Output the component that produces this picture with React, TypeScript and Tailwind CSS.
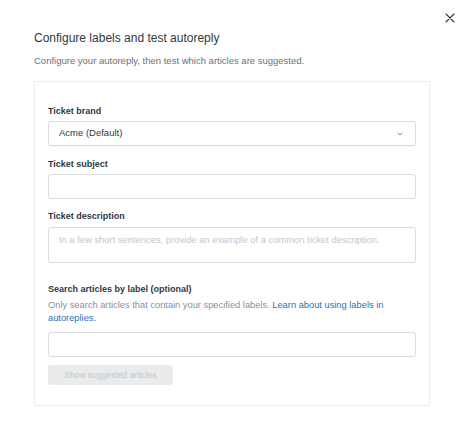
export default function App() {
  return (
    <div className="relative min-h-[423px] w-[474px] bg-white text-[#2f3941] font-['Liberation_Sans',Arial,sans-serif]">
      {/* close */}
      <button className="absolute right-[19px] top-[13px] flex h-[10px] w-[10px] items-center justify-center text-[#2f3941]">
        <svg width="10" height="10" viewBox="0 0 10 10" fill="none" stroke="currentColor" strokeWidth="1.1" strokeLinecap="round">
          <path d="M1 1l8 8M9 1L1 9" />
        </svg>
      </button>

      <div className="px-[34px] pt-[31px]">
        <h1 className="text-[12px] leading-[15px] font-normal">
          Configure labels and test autoreply
        </h1>
        <p className="mt-[8px] text-[9.5px] leading-[14px] text-[#68737d]">
          Configure your autoreply, then test which articles are suggested.
        </p>

        <div className="mt-[13px] w-[396px] border border-[#ececec] px-[13px] pt-[22px] pb-[20px]">
          <label className="block text-[9px] font-bold leading-[14px]">Ticket brand</label>
          <div className="mt-[3px] flex h-[25px] items-center justify-between rounded-[3px] border border-[#d8dcde] pl-[10px] pr-[12px] text-[9.5px] shadow-[0_1px_1px_rgba(0,0,0,0.03)]">
            <span>Acme (Default)</span>
            <svg width="6" height="4" viewBox="0 0 6 4" fill="none" stroke="#68737d" strokeWidth="0.9" strokeLinecap="round">
              <path d="M1 1l2 2 2-2" />
            </svg>
          </div>

          <label className="mt-[11px] block text-[9px] font-bold leading-[14px]">Ticket subject</label>
          <div className="mt-[3px] h-[25px] rounded-[3px] border border-[#d8dcde]" />

          <label className="mt-[10px] block text-[9px] font-bold leading-[14px]">Ticket description</label>
          <div className="mt-[4px] h-[36px] rounded-[3px] border border-[#d8dcde] px-[10px] pt-[5px] text-[9.4px] leading-[14px] text-[#c2c8cc]">
            In a few short sentences, provide an example of a common ticket description.
          </div>

          <label className="mt-[19px] block text-[9px] font-bold leading-[14px]">
            Search articles by label (optional)
          </label>
          <p className="mt-[3px] text-[9.3px] leading-[13px] text-[#87929d]">
            Only search articles that contain your specified labels.{" "}
            <a className="text-[#1f73b7]">Learn about using labels in autoreplies.</a>
          </p>
          <div className="mt-[7px] h-[25px] rounded-[3px] border border-[#d8dcde]" />

          <button className="mt-[8px] flex h-[20px] w-[125px] items-center justify-center rounded-[3px] bg-[#e9ebed] text-[8.5px] text-[#c2c8cc]">
            Show suggested articles
          </button>
        </div>
      </div>
    </div>
  );
}
